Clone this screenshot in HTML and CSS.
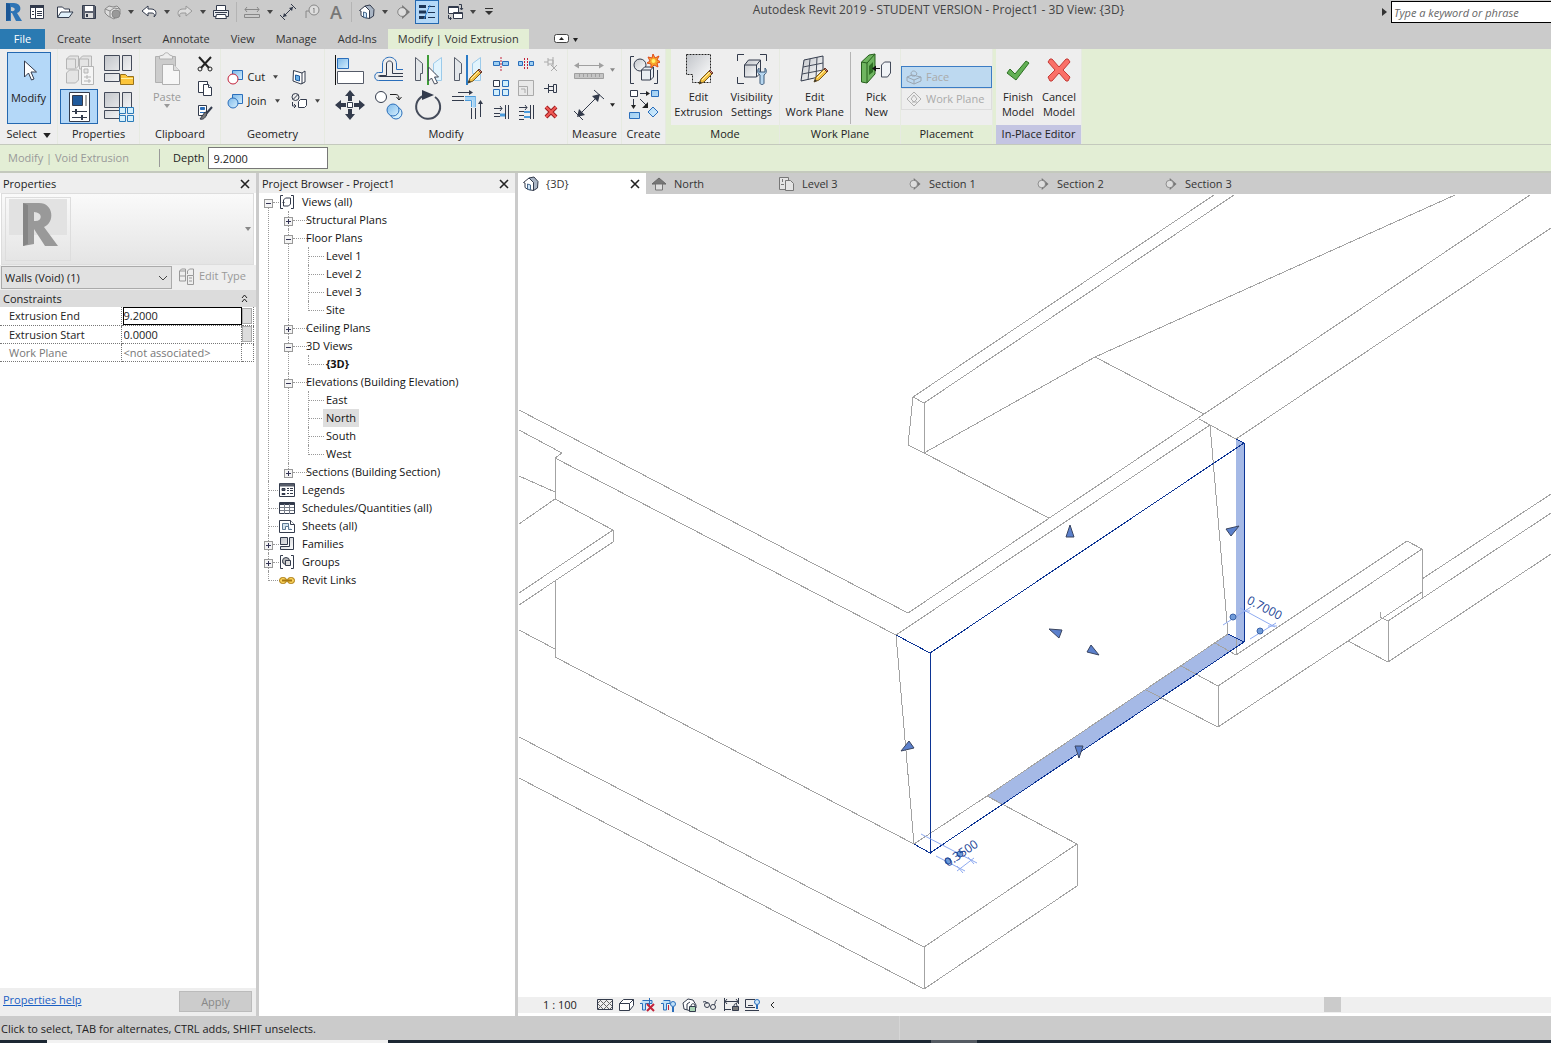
FILE: index.html
```
<!doctype html>
<html lang="en">
  <head>
    <meta charset="utf-8" />
    <title>Autodesk Revit 2019 - STUDENT VERSION - Project1 - 3D View: {3D}</title>
    <link rel="stylesheet" href="styles.css">
  </head>
  <body>
    <!-- shared icons -->
    <svg class="defs" aria-hidden="true">
      <defs>
        <linearGradient id="blue" x1="0" y1="0" x2="1" y2="1"><stop offset="0" stop-color="#7db8e8" /><stop offset="1" stop-color="#d6f0ff" /></linearGradient>
        <linearGradient id="grey" x1="0" y1="0" x2="1" y2="1"><stop offset="0" stop-color="#c2c5ca" /><stop offset="1" stop-color="#fff" /></linearGradient>
      </defs>
      <symbol id="down" viewBox="0 0 6 4"><path d="M0 0h6L3 4z" fill="currentColor" /></symbol>
      <symbol id="close" viewBox="0 0 10 10"><path d="M1 1l8 8M9 1L1 9" stroke="#222" stroke-width="1.600" /></symbol>
      <symbol id="pencil" viewBox="0 0 16 16"><path d="M1 15l2-5 9-9 3 3-9 9z" fill="#f3c244" stroke="#7a5a1c" /><path d="M4 11L13 2" stroke="#fff0b0" /><path d="M1 15l1-3 2 2z" fill="#333" /><path d="M11 2l3 3 1-1-3-3z" fill="#d98880" stroke="#6b3a2a" /></symbol>
      <symbol id="house" viewBox="0 0 16 16"><path d="M.500 6.500L6 2l4.500 4.500v8L5 13.500l-3-2V7z" fill="#fff" stroke="#333b4c" /><path d="M6 2l5-1 4 4.500-.500 6.500-4 2.500v-8z" fill="#a9b5c4" stroke="#333b4c" /><path d="M4.500 8v5l3 1V9z" fill="#cfe6fa" stroke="#4a6a8c" /></symbol>
      <symbol id="section" viewBox="0 0 16 16"><path d="M7 0l9 8-9 8z" fill="#777" /><circle cx="7" cy="8" r="5" fill="#ddd" stroke="#777" /></symbol>
    </svg>

    <header class="titlebar">
      <div class="quick-access">
        <button class="tool" aria-label="Revit"><svg width="18" height="20"><path fill-rule="evenodd" d="M2 1h8c8 0 8 9 3 10l5 8h-6l-4-8H7v8H2zm5 4v4c5 1 5-4 0-4z" fill="#2f74b5" /><path d="M2 1l4 1v16l-4 1z" fill="#1b5796" /></svg></button>
        <button class="tool" aria-label="Recent files"><svg width="16" height="16"><path d="M1.500 1.500h13v13h-13z" fill="#fff" stroke="#333b4c" /><path d="M1 1h14v3H1z" fill="#333b4c" /><path d="M6.500 4v10M3 7.500h2M3 10.500h2M8 7.500h5M8 9.500h5M8 11.500h5" stroke="#333b4c" /></svg></button>
        <button class="tool after-gap" aria-label="Open"><svg width="18" height="16"><path d="M1.500 13V3h5l2 2h5v3" fill="#fff" stroke="#333b4c" /><path d="M1.500 13.500L5 8h12l-4 5.500z" fill="#e0f0fa" stroke="#333b4c" /></svg></button>
        <button class="tool" aria-label="Save"><svg width="16" height="16"><path d="M1.500 1.500h12l1 1v12h-13z" fill="#5c6270" stroke="#333b4c" /><path d="M4 2h8v5H4z" fill="#fff" /><path d="M4 9h8v5H4z" fill="#ddd" /><path d="M6 10v3" stroke="#333b4c" stroke-width="2" /></svg></button>
        <button class="tool" aria-label="Synchronize"><svg width="18" height="16" fill="#ddd" stroke="#888"><path d="M1 5l4-3 4 1 4-1 3 3v5l-6 5-6-3-3-3z" /><path d="M1 5l5 2v6M6 7l4-3M10 4l6 1" /><circle cx="12" cy="10" r="4" fill="#999" /></svg></button>
        <button class="drop" aria-label="Synchronize options"><svg width="6" height="4"><use href="#down" /></svg></button>
        <button class="tool" aria-label="Undo"><svg width="16" height="14"><path d="M7 1v3h3c6 0 6 6 3 8 1-3 0-4-3-4H7v3L1 6z" fill="#fff" stroke="#333b4c" /></svg></button>
        <button class="drop" aria-label="Undo options"><svg width="6" height="4"><use href="#down" /></svg></button>
        <button class="tool" aria-label="Redo"><svg width="16" height="14"><path d="M9 1v3H6C0 4 0 10 3 12 2 9 3 8 6 8h3v3l6-5z" fill="#ddd" stroke="#999" /></svg></button>
        <button class="drop faded" aria-label="Redo options"><svg width="6" height="4"><use href="#down" /></svg></button>
        <button class="tool" aria-label="Print"><svg width="18" height="16" stroke="#333b4c"><path d="M4.500 1.500h9v5h-9z" fill="#fff" /><path d="M1.500 6.500h15v6h-15z" fill="#e8ebef" /><path d="M4.500 10.500h9l1 4h-11z" fill="#fff" /><path d="M3 8.500h12" /></svg></button>
        <span class="divider"></span>
        <button class="tool" aria-label="Measure"><svg width="16" height="12" fill="none" stroke="#888"><path d="M1 3.500h14M3 1L1 3.500 3 6M13 1l2 2.500L13 6M.500 8.500h15v3H.500z" /></svg></button>
        <button class="drop" aria-label="Measure options"><svg width="6" height="4"><use href="#down" /></svg></button>
        <button class="tool" aria-label="Aligned dimension"><svg width="16" height="16" stroke="#333b4c" fill="#333b4c"><path d="M3 13L13 3M0 11l5 5M11 0l5 5" /><path d="M3 13l1-4 3 3zM13 3l-1 4-3-3z" stroke="none" /></svg></button>
        <button class="tool" aria-label="Tag"><svg width="16" height="16" fill="#ddd" stroke="#888"><path d="M2 14V7h4" fill="none" /><circle cx="10" cy="6" r="5" /><path d="M9 5l1-1v5" fill="none" /></svg></button>
        <button class="tool letter" aria-label="Text">A</button>
        <span class="divider"></span>
        <button class="tool" aria-label="Default 3D view"><svg width="16" height="16"><use href="#house" /></svg></button>
        <button class="drop" aria-label="3D view options"><svg width="6" height="4"><use href="#down" /></svg></button>
        <button class="tool" aria-label="Section"><svg width="14" height="14"><use href="#section" /></svg></button>
        <button class="tool pressed" aria-label="Thin lines"><svg width="18" height="16" stroke="#1d3557" fill="none"><path d="M1 2.500h7M1 8h7M1 13.500h7" stroke-width="3" /><path d="M10 2.500h7M10 8.500h7M10 13.500h7" /><path d="M12 1L6 15" stroke="#2a7fd4" /></svg></button>
        <button class="tool after-gap" aria-label="Switch windows"><svg width="18" height="16" stroke="#333b4c"><path d="M2.500 2.500h10v7h-10zM7.500 8.500h9v6h-9z" fill="#fff" /><path d="M2 3.500h11M7 9.500h10" /><path d="M13 .500h2.500v5M14 4l1.500 2L17 4M2.500 11v3.500H5M4 13l1.500 1.500L4 16" fill="none" /></svg></button>
        <button class="drop" aria-label="Switch windows options"><svg width="6" height="4"><use href="#down" /></svg></button>
        <button class="drop customize" aria-label="Customize toolbar"><svg width="8" height="8" fill="#333"><path d="M0 0h8v1H0zM0 3h8L4 7z" /></svg></button>
      </div>
      <h1>Autodesk Revit 2019 - STUDENT VERSION - Project1 - 3D View: {3D}</h1>
      <svg class="search-arrow" width="5" height="8"><path d="M0 0l5 4-5 4z" fill="#333" /></svg>
      <input class="search" type="text" placeholder="Type a keyword or phrase" aria-label="Search" />
    </header>

    <nav class="tabs">
      <button class="file">File</button>
      <button>Create</button>
      <button>Insert</button>
      <button>Annotate</button>
      <button>View</button>
      <button>Manage</button>
      <button>Add-Ins</button>
      <button class="active">Modify | Void Extrusion</button>
      <button class="minimize" aria-label="Minimize ribbon"><svg width="24" height="10"><rect x=".5" y=".5" width="14" height="8" rx="2" fill="#fff" stroke="#444" /><path d="M5 6h5L7.500 3z" fill="#222" /><path d="M19 4h5l-2.500 4z" fill="#222" /></svg></button>
    </nav>

    <section class="ribbon">
      <div class="panel select">
        <div class="tools">
          <button class="big pressed"><svg width="32" height="34"><path d="M11.500 8v16l4-4 3 7 2.500-1-3-7h5.500z" fill="#fff" stroke="#333b4c" /></svg><span>Modify</span></button>
        </div>
        <h2>Select <svg width="8" height="5"><use href="#down" /></svg></h2>
      </div>

      <div class="panel properties-tools">
        <div class="tools pair-grid">
          <button aria-label="Type properties"><svg width="32" height="32" fill="#e4e4e4" stroke="#b5b5b5"><path d="M3.500 5l3-3h9v10l-3 3h-9zM16.500 5l3-3h9v10l-3 3h-9zM3.500 19l3-3h9v10l-3 3h-9z" /><path d="M3.500 5h9v9M16.500 5h9v9" fill="none" /><path d="M18.500 12.500h12v18h-12z" fill="#f5f5f5" /><path d="M21 15h4v4h-4zM21 23h7M21 27h7M24 21v4M26 25v4" /></svg></button>
          <button aria-label="Family category and parameters"><svg width="32" height="32" stroke="#444b5a"><path d="M1.500 1.500h15v15h-15zM19.500 1.500h9v15h-9zM1.500 19.500h15v8h-15z" fill="url(#grey)" /><path d="M17.500 20.500h5l2 2h6v8h-13z" fill="#fcc53a" stroke="#97711a" /><path d="M18 24.500h12" stroke="#fff0a0" /></svg></button>
          <button class="pressed" aria-label="Properties"><svg width="32" height="32" stroke="#333b4c"><path d="M6.500 1.500h20v29h-20z" fill="#fff" /><path d="M9.500 4.500h10v10h-10z" fill="#205a9c" /><path d="M23 4v11" stroke="#aaa" stroke-width="2" /><path d="M9 20.500h15M9 26.500h15" /><path d="M13 18v5M19 24v5" stroke-width="2" /></svg></button>
          <button aria-label="Family types"><svg width="32" height="32" stroke="#444b5a"><path d="M1.500 1.500h15v15h-15zM19.500 1.500h9v15h-9zM1.500 19.500h15v8h-15z" fill="url(#grey)" /><path d="M16.500 16.500h6v6h-6zM24.500 16.500h6v6h-6zM16.500 24.500h6v6h-6zM24.500 24.500h6v6h-6z" fill="#d5f0fc" stroke="#2a7ab8" /></svg></button>
        </div>
        <h2>Properties</h2>
      </div>

      <div class="panel clipboard">
        <div class="tools">
          <button class="big disabled" disabled><svg width="32" height="34" stroke="#b0b0b0"><path d="M4.500 4.500h20v26h-20z" fill="#ccc" /><path d="M8.500 7V4l4-1c1-3 5-3 6 0l3 1v3z" fill="#eee" /><path d="M11.500 12.500h11l6 6v14h-17z" fill="#f6f6f6" /><path d="M22.500 12.500v6h6" fill="#ddd" /></svg><span>Paste</span><svg width="6" height="4"><use href="#down" /></svg></button>
          <div class="stack">
            <button aria-label="Cut to clipboard"><svg width="16" height="16" fill="none" stroke="#222"><path d="M2 1l10 11M14 1L4 12" stroke-width="2" /><circle cx="3" cy="13" r="2" /><circle cx="13" cy="13" r="2" /></svg></button>
            <button aria-label="Copy to clipboard"><svg width="16" height="16" fill="#fff" stroke="#333b4c"><path d="M1.500 1.500h9v11h-9z" /><path d="M6.500 4.500h5l3 3v8h-8z" /><path d="M11.500 4.500v3h3" /></svg></button>
            <button aria-label="Match type"><svg width="16" height="16" stroke="#333b4c"><path d="M1.500 1.500h8v10h-8z" fill="#fff" /><path d="M3.500 3.500h4v2h-4zM3 8.500h5" fill="#2a6ebb" stroke="#2a6ebb" /><path d="M15 3l-6 7" stroke-width="2" /><path d="M10 9l-2-1-5 7c3 1 6-1 7-6z" fill="#777" /></svg></button>
          </div>
        </div>
        <h2>Clipboard</h2>
      </div>

      <div class="panel geometry">
        <div class="tools geometry-grid">
          <button><svg width="16" height="16"><path d="M5.500 1.500h10v9h-10z" fill="url(#blue)" stroke="#2a6ebb" /><circle cx="6" cy="10" r="5" fill="#fff" stroke="#c3223a" /></svg>Cut<svg class="menu-arrow" width="5" height="4"><use href="#down" /></svg></button>
          <button aria-label="Wall opening"><svg width="16" height="16" stroke="#333b4c"><path d="M2.500 1.500L11 4l3-2v11l-4 2-8-3z" fill="#fff" /><path d="M11 4v11" /><path d="M4.500 6l4 1v5l-4-1z" fill="#6cb3ea" stroke="#205a9c" /></svg></button>
          <button><svg width="16" height="16" fill="url(#blue)" stroke="#2a6ebb"><path d="M5.500 1.500h10v9h-10z" /><circle cx="6" cy="10" r="5" /></svg>Join<svg class="menu-arrow" width="5" height="4"><use href="#down" /></svg></button>
          <button aria-label="Geometry options"><svg width="16" height="16" fill="none" stroke="#333b4c"><circle cx="4.500" cy="4" r="3.500" /><path d="M2 6.500l5-5M1.500 9v4h3M3 11l2 2-2 2" /><path d="M7.500 8.500l2-2h6v6l-2 2h-6z" fill="#fff" /></svg><svg class="menu-arrow" width="5" height="4"><use href="#down" /></svg></button>
        </div>
        <h2>Geometry</h2>
      </div>

      <div class="panel modify">
        <div class="tools">
          <div class="big-grid">
            <button aria-label="Align"><svg width="32" height="32"><path d="M1.500 1v30" stroke="#111" /><path d="M3.500 4.500h11v10h-11z" fill="url(#blue)" stroke="#2a6ebb" /><path d="M3.500 17.500h26v12h-26z" fill="#fff" stroke="#555b68" /></svg></button>
            <button aria-label="Offset"><svg width="32" height="32" fill="none"><path d="M30 26.500H5.500c-5 0-5-8 0-8h4V10c0-9 14-9 14 0v5.500H30" stroke="#2a6ebb" /><path d="M30 22.500H7c-2 0-2-1 0-1h6.500V10c0-4 6-4 6 0v9.500H30" stroke="#333b4c" /></svg></button>
            <button aria-label="Mirror pick axis"><svg width="32" height="32"><path d="M3.500 3.500l7 6v10h-2v7h-5z" fill="#e4e7ea" stroke="#555b68" /><path d="M29.500 3.500l-8 6v10h2v7h6z" fill="#e2f4fd" stroke="#9bcaea" /><path d="M16 1v30" stroke="#3e9b38" stroke-width="2" /><path d="M16.500 13v14l3-3 3 6 3-1-3-6h4z" fill="#fff" stroke="#444b5a" /></svg></button>
            <button aria-label="Mirror draw axis"><svg width="32" height="32"><path d="M3.500 3.500l7 6v10h-2v7h-5z" fill="#e4e7ea" stroke="#555b68" /><path d="M29.500 3.500l-8 6v10h2v7h6z" fill="#e2f4fd" stroke="#9bcaea" /><path d="M16 1v30" stroke="#2a7ac6" stroke-width="2" /><use href="#pencil" x="16" y="14" width="16" height="16" /></svg></button>
            <button aria-label="Move"><svg width="32" height="32"><path d="M16 1l5 6h-3v5h-4V7h-3zM16 31l5-6h-3v-5h-4v5h-3zM1 16l6-5v3h5v4H7v3zM31 16l-6-5v3h-5v4h5v3z" fill="#333b4c" /><path d="M13.500 13.500h5v5h-5z" fill="#fff" stroke="#333b4c" /></svg></button>
            <button aria-label="Copy"><svg width="32" height="32" stroke="#2a6ebb"><circle cx="8" cy="8" r="5.500" fill="#fff" stroke="#333b4c" /><circle cx="23" cy="24" r="6" fill="#d3effc" /><circle cx="20" cy="21" r="6" fill="url(#blue)" /><path d="M17 5.500h5c3 0 4 1 4 5M23.500 8l2.500 3 2.500-3" fill="none" stroke="#222" /></svg></button>
            <button aria-label="Rotate"><svg width="32" height="32"><path d="M11 7a12 12 0 1 0 12 1" fill="none" stroke="#444b5a" stroke-width="2" /><path d="M10 1l12 5-12 5z" fill="#333b4c" /></svg></button>
            <button aria-label="Trim to corner"><svg width="32" height="32" fill="none"><path d="M14 7.500h10.500V18M14 11.500h6.500V18" stroke="#4b9bdb" /><path d="M14 9.500h9v9" stroke="#a6d4f5" stroke-width="3" /><path d="M1 7.500h12M1 11.500h12M20.500 19v11M24.500 19v11M7 3.500h14M29.500 28V13" stroke="#333b4c" /><path d="M18 1l4 2.500L18 6zM27 15l2.500-4 2.500 4z" fill="#333b4c" /></svg></button>
          </div>
          <div class="small-grid">
            <button aria-label="Split"><svg width="16" height="16"><path d="M.500 5.500h6v4h-6zM9.500 5.500h6v4h-6z" fill="#9fd0f2" stroke="#2a6ebb" /><path d="M8 1v14" stroke="#c3223a" stroke-dasharray="2 1" /></svg></button>
            <button aria-label="Split with gap"><svg width="16" height="16"><path d="M.500 5.500h4v4h-4zM11.500 5.500h4v4h-4z" fill="#9fd0f2" stroke="#2a6ebb" /><path d="M6.500 2v11M9.500 2v11" stroke="#c3223a" stroke-dasharray="2 1" /></svg></button>
            <button aria-label="Unpin"><svg width="16" height="16" fill="none" stroke="#aaa"><path d="M1 6h4M5 2v8M5 4h5v4H5M10 1v10M8 9l6 6M14 9l-6 6" /></svg></button>
            <button aria-label="Array"><svg width="18" height="18" stroke="#2a6ebb" fill="#d3effc"><path d="M10.500 1.500h6v6h-6zM1.500 10.500h6v6h-6zM10.500 10.500h6v6h-6z" /><path d="M1.500 1.500h6v6h-6z" fill="#fff" stroke="#333b4c" /></svg></button>
            <button aria-label="Scale"><svg width="16" height="16" fill="#e8e8e8" stroke="#aaa"><path d="M.500 .500h15v15H.500z" /><path d="M.500 6.500h9v9h-9z" /><path d="M3 9h4v4" /></svg></button>
            <button aria-label="Pin"><svg width="16" height="16" fill="none" stroke="#333b4c"><path d="M1 8.500h4M5.500 4v9M5.500 6.500h5v4h-5M10.500 4.500h3v8h-3z" /></svg></button>
            <button aria-label="Trim single"><svg width="16" height="16" stroke="#333b4c" fill="none"><path d="M1 4.500h8M7 2l2 2.500L7 7M1 9.500h6M1 12.500h6M12.500 1v14M15.500 1v14" /><path d="M7 11h5" stroke="#4b9bdb" stroke-width="3" /></svg></button>
            <button aria-label="Trim multiple"><svg width="16" height="16" stroke="#333b4c" fill="none"><path d="M1 3.500h8M7 1l2 2.500L7 6M1 7.500h5M1 11.500h5M1 15.500h5M12.500 1v14M15.500 1v14" /><path d="M6 8h6M6 13h6" stroke="#4b9bdb" stroke-width="2" /></svg></button>
            <button aria-label="Delete"><svg width="14" height="14"><path d="M2 2l10 10M12 2L2 12" stroke="#9d1d22" stroke-width="4" /><path d="M2 2l10 10M12 2L2 12" stroke="#f25a55" stroke-width="2" /></svg></button>
          </div>
        </div>
        <h2>Modify</h2>
      </div>

      <div class="panel measure">
        <div class="tools with-drops">
          <button aria-label="Measure"><svg width="32" height="32" stroke="#a0a0a0" fill="#c5c5c5"><path d="M2 11.500h28" /><path d="M1 11.500l5-3v6zM31 11.500l-5-3v6z" fill="#a0a0a0" stroke="none" /><path d="M1.500 19.500h29v5h-29z" /><path d="M6.500 20v3M10.500 20v3M14.500 20v3M18.500 20v3M22.500 20v3M26.500 20v3" /></svg></button>
          <button class="faded" aria-label="Measure options"><svg width="5" height="4"><use href="#down" /></svg></button>
          <button aria-label="Dimension"><svg width="32" height="32" stroke="#333b4c" fill="#333b4c"><path d="M5 27L26 6M1 22l9 9M21 1l10 9" /><path d="M4 28l2-8 6 6zM27 5l-2 8-6-6z" stroke="none" /></svg></button>
          <button aria-label="Dimension options"><svg width="5" height="4"><use href="#down" /></svg></button>
        </div>
        <h2>Measure</h2>
      </div>

      <div class="panel create">
        <div class="tools">
          <button aria-label="Create group"><svg width="32" height="32" stroke="#333b4c"><path d="M6 2.500H2.500v27H6M26 29.500h3.500V16" fill="none" /><circle cx="12" cy="11" r="6" fill="url(#grey)" /><path d="M13.500 16l3-3h9v10l-3 3h-9z" fill="#e8edf2" /><path d="M13.500 16h9v10M22.500 16l3-3" fill="none" /><path d="M25 0l2 4 4-2-2 4 4 2-4 1 1 4-4-2-3 3 0-4-4-1 3-2-2-4 4 1z" fill="#f7a52a" stroke="#e04a18" /><circle cx="25.500" cy="7" r="2" fill="#fff36b" stroke="none" /></svg></button>
          <button aria-label="Create similar"><svg width="32" height="32" stroke="#333b4c"><path d="M2.500 1.500h7v6h-7z" fill="#fff" /><path d="M12 4.500h8M5.500 10v8M12 10l6 6" fill="none" /><path d="M18 2l4 2.500L18 7zM3 16l2.500 4L8 16zM20 13v6h-6z" fill="#222" stroke="none" /><path d="M23.500 1.500h7v6h-7zM1.500 23.500h10v6h-10zM25 18l5 5-5 5-5-5z" fill="url(#blue)" stroke="#2a6ebb" /></svg></button>
        </div>
        <h2>Create</h2>
      </div>

      <div class="panel contextual mode">
        <div class="tools">
          <button class="big"><svg width="32" height="34"><path d="M3.500 2.500h24v28h-18v-8h-6z" fill="url(#grey)" stroke="#222" stroke-dasharray="2 1" /><use href="#pencil" x="15" y="17" width="16" height="16" /></svg><span>Edit<br />Extrusion</span></button>
          <button class="big"><svg width="32" height="34" stroke="#333b4c"><path d="M1.500 9V2.500H8M24 2.500h6.500V9M1.500 25v6.500H8" fill="none" /><path d="M8.500 13l4-5h12v13l-4 4h-12z" fill="url(#grey)" /><path d="M8.500 13h12v12M20.500 13l4-5" fill="none" /><path d="M23 16c-2 2-2 5 1 7v8c0 2 4 2 4 0v-8c3-2 3-5 1-7v4h-6z" fill="#b7d7f0" stroke="#3b5878" /></svg><span>Visibility<br />Settings</span></button>
        </div>
        <h2>Mode</h2>
      </div>

      <div class="panel contextual workplane">
        <div class="tools">
          <button class="big"><svg width="32" height="34"><path d="M5 8l19-4v20L2 29z" fill="url(#grey)" stroke="#333b4c" /><path d="M11 7L9 28M18 5l-1 21M4 15l20-4M3 22l21-4" stroke="#444b5a" /><use href="#pencil" x="14" y="15" width="16" height="16" /></svg><span>Edit<br />Work Plane</span></button>
          <span class="divider"></span>
          <button class="big"><svg width="32" height="34"><path d="M1.500 10L9 3l6-1v20l-8 9-5.500-1z" fill="#6fb560" stroke="#28601f" /><path d="M1.500 10l5.500 1v20M7 11l8-9" fill="none" stroke="#28601f" /><path d="M9 14l4-4v10l-4 3z" fill="#2e7024" /><path d="M13 16.500h7" stroke="#111" /><path d="M12 16.500l4-3v6z" fill="#111" /><path d="M21.500 13l3-3h6v11l-3 4h-6z" fill="#f0f3f6" stroke="#444b5a" /></svg><span>Pick<br />New</span></button>
        </div>
        <h2>Work Plane</h2>
      </div>

      <div class="panel contextual placement">
        <div class="tools">
          <button class="face" disabled><svg width="16" height="16" fill="none" stroke="#9aa6b2"><path d="M1 8l5-2 9 2v4l-7 3-7-3z" /><path d="M1 8l7 3 7-3M8 11v4M5 5c0-4 5-4 6 0L9 7H6z" /></svg>Face</button>
          <button class="plane" disabled><svg width="16" height="16" fill="none" stroke="#b0b0b0"><path d="M8 1l7 7-7 7-7-7z" /><path d="M5 8l3-4 3 4-3 3zM6 11h5" /></svg>Work Plane</button>
        </div>
        <h2>Placement</h2>
      </div>

      <div class="panel contextual inplace">
        <div class="tools">
          <button class="big"><svg width="32" height="34"><path d="M5 21l3-4 5 5L24 9l3 2-13 17z" fill="#63b055" stroke="#2e7024" /></svg><span>Finish<br />Model</span></button>
          <button class="big"><svg width="32" height="34"><path d="M5 10l2-3h2l7 8 7-8h2l2 3-7 8 7 7-2 4h-2l-7-8-7 8H7l-2-4 7-7z" fill="#fa7068" stroke="#c43a36" /></svg><span>Cancel<br />Model</span></button>
        </div>
        <h2>In-Place Editor</h2>
      </div>
    </section>

    <section class="options">
      <span class="context">Modify | Void Extrusion</span>
      <label for="depth">Depth</label>
      <input id="depth" type="text" value="9.2000" />
    </section>

    <main>
      <aside class="properties">
        <div class="caption"><h2>Properties</h2><button aria-label="Close properties"><svg width="10" height="10"><use href="#close" /></svg></button></div>
        <button class="type-selector" aria-label="Type selector">
          <svg class="preview" width="66" height="64"><path d="M3 1h58v36H3z" fill="#e2e2e2" /><path fill-rule="evenodd" d="M17 5h16c15 0 16 20 5 24l14 19H39L28 31v15l-11 2zm11 9v9c9 1 9-9 0-9z" fill="#999" /><path d="M17 5l5 2v39l-5 2z" fill="#858585" /></svg>
          <svg width="8" height="4"><use href="#down" /></svg>
        </button>
        <div class="filter">
          <select aria-label="Element filter"><option>Walls (Void) (1)</option></select>
          <button disabled><svg width="17" height="17" fill="none" stroke="#999"><path d="M1.500 3l2-2h4v12h-6zM8 8H2M9.500 6V3l2-2h4v6M8 3H2" /><path d="M9.500 7.500h6v9h-6zM11 10h3M11 13h3" /></svg>Edit Type</button>
        </div>
        <div class="group">Constraints <svg width="7" height="9" fill="none" stroke="#222"><path d="M1 4l2.500-3L6 4M1 8l2.500-3L6 8" /></svg></div>
        <table>
          <tr>
            <td><label for="end">Extrusion End</label></td>
            <td><input id="end" class="focused" type="text" value="9.2000" /></td>
            <td><button aria-label="Associate extrusion end"></button></td>
          </tr>
          <tr>
            <td><label for="start">Extrusion Start</label></td>
            <td><input id="start" type="text" value="0.0000" /></td>
            <td><button aria-label="Associate extrusion start"></button></td>
          </tr>
          <tr class="readonly">
            <td>Work Plane</td>
            <td>&lt;not associated&gt;</td>
            <td></td>
          </tr>
        </table>
        <div class="footer"><a href="#help">Properties help</a><button disabled>Apply</button></div>
      </aside>

      <aside class="browser">
        <div class="caption"><h2>Project Browser - Project1</h2><button aria-label="Close project browser"><svg width="10" height="10"><use href="#close" /></svg></button></div>
        <ul class="tree">
          <li>
            <div class="node"><button class="toggle" aria-label="Collapse"></button><svg width="16" height="16" fill="none" stroke="#333b4c"><path d="M4 1.500H1.500v13H4M12 1.500h2.500v13H12M4.500 6l2-2h5v6l-2 2h-5z" /></svg><span>Views (all)</span></div>
            <ul>
              <li><div class="node"><button class="toggle plus" aria-label="Expand"></button><span>Structural Plans</span></div></li>
              <li>
                <div class="node"><button class="toggle" aria-label="Collapse"></button><span>Floor Plans</span></div>
                <ul>
                  <li><div class="node"><span>Level 1</span></div></li>
                  <li><div class="node"><span>Level 2</span></div></li>
                  <li><div class="node"><span>Level 3</span></div></li>
                  <li><div class="node"><span>Site</span></div></li>
                </ul>
              </li>
              <li><div class="node"><button class="toggle plus" aria-label="Expand"></button><span>Ceiling Plans</span></div></li>
              <li>
                <div class="node"><button class="toggle" aria-label="Collapse"></button><span>3D Views</span></div>
                <ul>
                  <li><div class="node"><span class="current">{3D}</span></div></li>
                </ul>
              </li>
              <li>
                <div class="node"><button class="toggle" aria-label="Collapse"></button><span>Elevations (Building Elevation)</span></div>
                <ul>
                  <li><div class="node"><span>East</span></div></li>
                  <li><div class="node"><span class="selected">North</span></div></li>
                  <li><div class="node"><span>South</span></div></li>
                  <li><div class="node"><span>West</span></div></li>
                </ul>
              </li>
              <li><div class="node"><button class="toggle plus" aria-label="Expand"></button><span>Sections (Building Section)</span></div></li>
            </ul>
          </li>
          <li><div class="node"><svg width="16" height="16" fill="#fff" stroke="#333b4c"><path d="M.500 1.500h15v13H.500z" /><path d="M1 3h14" stroke-width="3" stroke="#555b68" /><path d="M3 6.500h3v2H3zM3 11.500h3v1H3z" fill="#555b68" /><path d="M8 6.500h2M11 6.500h3M8 8.500h2M11 8.500h3M8 11.500h2M11 11.500h3" /></svg><span>Legends</span></div></li>
          <li><div class="node"><svg width="16" height="16" fill="#fff" stroke="#777d88"><path d="M.500 2.500h15v11H.500z" stroke="#333b4c" /><path d="M1 4h14" stroke-width="2" stroke="#333b4c" /><path d="M1 7.500h14M1 10.500h14M5.500 4v10M10.500 4v10" /></svg><span>Schedules/Quantities (all)</span></div></li>
          <li><div class="node"><svg width="16" height="16" fill="#fff" stroke="#333b4c"><path d="M.500 2.500h11l4 4v8H.500z" /><path d="M11.500 2.500v4h4" /><path d="M3.500 5.500h6v3h-3v3h-3zM9.500 8v3.500H13" stroke="#5c7894" fill="#d4e4ee" /></svg><span>Sheets (all)</span></div></li>
          <li><div class="node"><button class="toggle plus" aria-label="Expand"></button><svg width="16" height="16" fill="url(#grey)" stroke="#333b4c"><path d="M1.500 1.500h7v7h-7zM10.500 1.500h4v12h-13v-3h9z" /></svg><span>Families</span></div></li>
          <li><div class="node"><button class="toggle plus" aria-label="Expand"></button><svg width="16" height="16" fill="#bbb" stroke="#333b4c"><path d="M4 1.500H1.500v13H4M12 1.500h2.500v13H12" fill="none" /><circle cx="7" cy="7" r="3.500" /><path d="M6.500 6.500h5v5h-5z" fill="#ddd" /></svg><span>Groups</span></div></li>
          <li><div class="node"><svg width="16" height="16" fill="#f7cf5a" stroke="#a8780f"><rect x=".5" y="5.500" width="7" height="6" rx="3" /><rect x="8.500" y="5.500" width="7" height="6" rx="3" /><path d="M3 8.500h10" stroke-width="2" /></svg><span>Revit Links</span></div></li>
        </ul>
      </aside>

      <section class="view">
        <nav class="view-tabs">
          <div class="view-tab active"><svg width="16" height="16"><use href="#house" /></svg><a href="#3d">{3D}</a><button aria-label="Close view"><svg width="10" height="10"><use href="#close" /></svg></button></div>
          <div class="view-tab"><svg width="16" height="16"><path d="M8 2l7 6H1z" fill="#777" stroke="#666" /><path d="M4.500 8v6h7V8z" fill="#ddd" stroke="#777" /></svg><a href="#north">North</a></div>
          <div class="view-tab"><svg width="16" height="16" fill="#e4e4e4" stroke="#777"><path d="M.500 1.500h9v12h-9z" /><path d="M6.500 4.500h5l3 3v7h-8z" /><path d="M3.500 3v3M2 8.500h3" /></svg><a href="#level3">Level 3</a></div>
          <div class="view-tab"><svg width="15" height="12"><use href="#section" /></svg><a href="#section1">Section 1</a></div>
          <div class="view-tab"><svg width="15" height="12"><use href="#section" /></svg><a href="#section2">Section 2</a></div>
          <div class="view-tab"><svg width="15" height="12"><use href="#section" /></svg><a href="#section3">Section 3</a></div>
        </nav>

        <svg class="model" viewBox="518 194 1033 803" preserveAspectRatio="xMinYMin slice" role="img" aria-label="3D view">
          <!-- void faces -->
          <path class="face-fill" d="M987 796L1228 634 1244 642 1002 805zM1236 439L1244 443V642L1236 638z" />
          <g class="edges">
            <!-- upper slab -->
            <path d="M1214 195L913 397 908 445 924 453 1049 518M913 397L924 403V453M924 403L1234 195M924 453L1095 357 1455 195M1095 357L1204 414" />
            <!-- wall -->
            <path d="M519 410L908 613 1530 195M1199 419L1236 439 1551 228M1210 425L896 635 914 844 987 796 1228 634 1210 425" />
            <path d="M519 430L562 453 555 458 896 635M555 458V499M519 476L555 492M519 524L555 499 613 530V542L519 605M613 530L519 593M555 581V657L914 844M519 630L555 649" />
            <!-- footings -->
            <path d="M519 737L924 947 1077 844 987 796M1077 844V886L924 989 519 778M924 947V989" />
            <path d="M1181 666L1218 686 1422 549M1146 690L1218 727 1422 592M1218 686V727M1215 643L1236 655 1407 541 1422 549V598M1236 638V655" />
            <path d="M1422 579L1551 494M1380 617L1388 621 1551 513M1388 621V662L1551 554M1380 617V612M1348 641L1388 662" />
          </g>
          <path class="void" d="M896 635L930 653 1244 443 1236 439M930 653V853L914 844M930 853L1244 642V443M1228 634L1244 642" />
          <g class="arrows">
            <path d="M1070 525L1066 537H1074zM1239 526L1226 529 1231 536zM1049 629L1062 630 1059 638zM1099 655L1087 652 1091 645zM901 751L909 741 914 748zM1079 758L1075 746H1083z" />
          </g>
          <g class="dimension">
            <path d="M1223 625L1251 607M1250 639L1276 623M1240 608L1275 627M1243 611h7M1268 626h9M921 834L977 863M936 856L965 871M957 871L974 858M968 857l6 7M957 866l6 7" />
            <circle cx="1233" cy="617" r="3" /><circle cx="1260" cy="631" r="3" /><circle cx="948" cy="861" r="3" /><circle cx="960" cy="854" r="3" />
            <text transform="translate(1246 603) rotate(27)">0.7000</text>
            <text transform="translate(948 867) rotate(-34)">0.3500</text>
          </g>
        </svg>

        <div class="view-controls">
          <button class="scale">1 : 100</button>
          <button aria-label="Detail level"><svg width="17" height="16" stroke="#333b4c"><path d="M.500 2.500h15v10H.500z" fill="#eee" /><path d="M1 6l3-3M1 12l9-9M7 12l8-8M13 12l2-2M3 3l9 9M9 3l6 6M1 7l5 5" stroke="#666" /></svg></button>
          <button aria-label="Visual style"><svg width="17" height="16" fill="#fff" stroke="#333b4c"><path d="M1.500 6.500l4-4h10v6l-4 5h-10z" /><path d="M1.500 6.500h10v7M11.500 6.500l4-4" /></svg></button>
          <button aria-label="Crop view"><svg width="17" height="16" fill="#bfe0f8" stroke="#2a6ebb"><path d="M1 6.500h2.500V13h3V6.500H13V3.500H3.500M10.500 1v9" /><path d="M8 7l7 7M15 7l-7 7" stroke="#c3223a" stroke-width="2" /></svg></button>
          <button aria-label="Show crop region"><svg width="17" height="16" fill="#bfe0f8" stroke="#2a6ebb"><path d="M1 6.500h2.500V13h3V6.500H10V3.500H3.500" /><path d="M8.500 8v5" stroke="#c3223a" /><path d="M13 10v5" stroke-width="2" /><circle cx="13" cy="7" r="2.500" /></svg></button>
          <button aria-label="Lock 3D view"><svg width="17" height="16" fill="#fff" stroke="#333b4c"><path d="M2 6l5-4 5 1 3 5v3l-5 3-7-2z" /><path d="M6 7v6M9 5l-3 2" /><path d="M8.500 9.500h6v5h-6z" fill="#a8d4b4" /><path d="M10 9c0-3 4-3 4 0" fill="none" /></svg></button>
          <button aria-label="Temporary hide"><svg width="17" height="16" fill="none" stroke="#333b4c"><path d="M1 5c3-1 4 0 4 2M15 3c-3 1-1 4-3 5" /><circle cx="5" cy="8" r="2.500" /><circle cx="11" cy="10" r="2.500" /></svg></button>
          <button aria-label="Reveal constraints"><svg width="17" height="16" fill="none" stroke="#333b4c"><path d="M1.500 1v13M15.500 1v6M2 4.500h13M4 2L2 4.500 4 7M13 2l2 2.500L13 7M2 12.500h6" /><path d="M9.500 9.500h6v4h-6z" fill="#777" /><path d="M11 9c0-3 3-3 3 0" /></svg></button>
          <button aria-label="Analytical model"><svg width="17" height="16" fill="none" stroke="#333b4c"><path d="M11 2.500H1.500v8H11M1 13.500h14M4 8.500h5" /><circle cx="13" cy="5" r="2.500" fill="#cfe8fa" stroke="#2a6ebb" /><path d="M13 8v4" stroke="#2a6ebb" stroke-width="2" /></svg></button>
          <button class="collapse" aria-label="Scroll left"><svg width="6" height="8"><path d="M5 1L2 4l3 3" fill="none" stroke="#222" /></svg></button>
          <div class="scroller"><div class="thumb"></div></div>
        </div>
      </section>
    </main>

    <footer class="status"><p>Click to select, TAB for alternates, CTRL adds, SHIFT unselects.</p></footer>
    <div class="taskbar"><span class="light"></span><span class="mid"></span></div>
  </body>
</html>
```
FILE: styles.css
```
* {
  box-sizing: border-box;
}
body {
  margin: 0;
  height: 100vh;
  display: flex;
  flex-direction: column;
  overflow: hidden;
  background: #cbcbcb;
  color: #222;
  font: 11px/18px "Open Sans", "Noto Sans", sans-serif;
}
h1,
h2,
p,
ul {
  margin: 0;
  padding: 0;
  font-size: inherit;
  font-weight: normal;
  list-style: none;
}
button,
input,
select {
  font: inherit;
  color: inherit;
  padding: 0;
  margin: 0;
  border: 0;
  background: none;
  border-radius: 0;
}
button {
  display: flex;
  align-items: center;
  justify-content: center;
  white-space: nowrap;
}
svg {
  flex: none;
}
.defs {
  position: absolute;
  width: 0;
  height: 0;
}
.faded {
  color: #888;
}

/* title bar */
.titlebar {
  display: flex;
  height: 24px;
  flex: none;
}
.quick-access {
  display: flex;
  align-items: center;
  padding-left: 1px;
}
.tool {
  width: 24px;
  height: 24px;
}
.drop {
  width: 12px;
  height: 24px;
  color: #444;
}
.after-gap {
  margin-left: 4px;
}
.letter {
  font-size: 18px;
  font-weight: 600;
  color: #777;
}
.customize {
  margin-left: 4px;
}
.pressed {
  background: #b4d8f8;
  border: 1px solid #2468b0;
}
.divider {
  width: 1px;
  height: 20px;
  margin: 0 3px;
  background: #b4b4b4;
}
.titlebar h1 {
  flex: 1;
  text-align: center;
  font-size: 12px;
  line-height: 20px;
  color: #444;
}
.search-arrow {
  margin: 8px 4px 0 0;
}
.search {
  width: 160px;
  height: 22px;
  margin-top: 1px;
  padding: 0 2px;
  border: 1px solid #000;
  border-right: 0;
  background: #fff;
}
.search::placeholder {
  color: #666;
  font-style: italic;
}

/* ribbon tabs */
.tabs {
  display: flex;
  flex: none;
  gap: 1px;
  padding-top: 5px;
  height: 25px;
}
.tabs button {
  padding: 0 10px;
  color: #333;
}
.tabs .file {
  width: 45px;
  margin-right: 1px;
  background: #2a7ab2;
  color: #fff;
}
.tabs .active {
  background: #e3eed5;
}
.tabs .minimize {
  margin-left: 14px;
}

/* ribbon */
.ribbon {
  display: flex;
  flex: none;
  height: 96px;
  background: #e3eed5;
  border-bottom: 1px solid #c4c9bd;
}
.panel {
  display: flex;
  flex-direction: column;
  flex: none;
  background: #eee;
  border-right: 1px solid #e6eae1;
}
.panel h2 {
  text-align: center;
  height: 19px;
  white-space: nowrap;
}
.panel h2 svg {
  margin-left: 3px;
}
.tools {
  flex: 1;
  display: flex;
  justify-content: center;
  padding-top: 3px;
}
.contextual h2 {
  background: #e3eed5;
}
.big {
  flex-direction: column;
  justify-content: flex-start;
  height: 72px;
  line-height: 15px;
}
.big span {
  margin-top: 3px;
}
.disabled {
  color: #999;
}
.select {
  width: 58px;
}
.select .big {
  width: 44px;
}
.properties-tools {
  width: 82px;
}
.pair-grid {
  display: grid;
  grid-template-columns: 38px 38px;
  grid-template-rows: 35px 35px;
  gap: 2px;
}
.clipboard {
  width: 81px;
}
.clipboard .tools {
  gap: 14px;
  padding-left: 4px;
}
.stack {
  display: grid;
  grid-template-rows: repeat(3, 24px);
}
.geometry {
  width: 104px;
}
.geometry-grid {
  display: grid;
  grid-template-columns: 64px 28px;
  grid-auto-rows: 24px;
  align-content: center;
}
.geometry-grid button {
  justify-content: flex-start;
  gap: 5px;
}
.menu-arrow {
  margin-left: 3px;
  color: #444;
}
.modify {
  width: 243px;
}
.modify .tools {
  gap: 2px;
  padding-left: 2px;
}
.big-grid {
  display: grid;
  grid-template-columns: repeat(4, 39px);
  grid-auto-rows: 35px;
}
.small-grid {
  display: grid;
  grid-template-columns: repeat(3, 25px);
  grid-auto-rows: 24px;
}
.measure {
  width: 54px;
}
.with-drops {
  display: grid;
  grid-template-columns: 36px 12px;
  grid-auto-rows: 35px;
}
.create {
  width: 44px;
}
.create .tools {
  display: grid;
  grid-auto-rows: 35px;
}
.mode {
  margin-left: 5px;
  width: 109px;
}
.mode .big {
  width: 53px;
}
.workplane {
  width: 121px;
}
.workplane .tools {
  justify-content: flex-start;
}
.workplane .big {
  width: 70px;
}
.workplane .big:last-child {
  width: 48px;
}
.workplane .divider {
  height: 72px;
  margin: 0 1px;
}
.placement {
  width: 92px;
}
.placement .tools {
  flex-direction: column;
  justify-content: flex-start;
  padding-top: 17px;
}
.placement button {
  height: 22px;
  justify-content: flex-start;
  gap: 4px;
  padding-left: 4px;
  color: #aaa;
}
.face {
  background: #bdd9f0;
  border: 1px solid #3b7cc4;
}
.plane {
  border: 1px solid #ddd;
}
.inplace {
  margin-left: 3px;
  width: 86px;
}
.inplace .big {
  width: 41px;
}
.inplace h2 {
  background: #c4c5e2;
}

/* options bar */
.options {
  display: flex;
  align-items: center;
  flex: none;
  height: 28px;
  background: #e3eed5;
  border-bottom: 2px solid #c4c9bd;
}
.context {
  width: 160px;
  padding-left: 8px;
  border-right: 1px solid #999;
  color: #999;
}
.options label {
  padding: 0 3px 0 13px;
}
.options input {
  width: 120px;
  height: 22px;
  padding: 0 5px;
  border: 1px solid #777;
  background: #fff;
}

/* docked palettes */
main {
  flex: 1;
  min-height: 0;
  display: flex;
  gap: 3px;
}
aside {
  flex: none;
  display: flex;
  flex-direction: column;
  background: #fff;
}
.caption {
  display: flex;
  justify-content: space-between;
  flex: none;
  height: 20px;
  padding: 0 6px 0 3px;
  background: #eee;
  line-height: 21px;
}
.properties {
  width: 256px;
}
.caption button {
  padding-top: 1px;
}
.type-selector {
  flex: none;
  justify-content: space-between;
  height: 72px;
  margin: 0 2px 0 1px;
  padding: 0 1px 0 3px;
  border: 1px solid #ddd;
  background: linear-gradient(#fafafa, #e4e4e4);
  color: #888;
}
.preview {
  border: 1px solid #ddd;
}
.filter {
  display: flex;
  flex: none;
  height: 25px;
  padding: 1px 3px 1px 1px;
  background: #eee;
}
.filter select {
  width: 171px;
  padding-left: 3px;
  border: 1px solid #aaa;
  appearance: none;
  background: #e1e1e1 url("data:image/svg+xml,%3Csvg xmlns='http://www.w3.org/2000/svg' width='10' height='6' fill='none' stroke='%23444'%3E%3Cpath d='M1 1l4 4 4-4'/%3E%3C/svg%3E") no-repeat right 3px center;
}
.filter button {
  margin-left: 6px;
  gap: 4px;
  color: #999;
  height: 20px;
}
.group {
  display: flex;
  justify-content: space-between;
  align-items: center;
  flex: none;
  height: 17px;
  padding: 0 8px 0 3px;
  background: #dcdcdc;
}
.properties table {
  flex: none;
  width: 254px;
  border-collapse: collapse;
  table-layout: fixed;
}
.properties td {
  height: 18px;
  padding: 0 0 0 2px;
  line-height: 17px;
  border: 1px dotted #777;
  border-top: 0;
}
.properties td:first-child {
  width: 121px;
  padding-left: 9px;
  border-left: 0;
}
.properties td:last-child {
  width: 12px;
  padding: 0;
}
.properties td input {
  display: block;
  width: 100%;
  height: 16px;
}
.properties td .focused {
  outline: 1px solid #000;
}
.properties td button {
  width: 10px;
  height: 16px;
  border: 1px solid #aaa;
  background: #ddd;
}
.readonly {
  color: #777;
}
.footer {
  margin-top: auto;
  display: flex;
  justify-content: space-between;
  flex: none;
  height: 28px;
  padding: 3px 4px 4px 3px;
  background: #eee;
}
.footer a {
  color: #1a5fc4;
}
.footer button {
  width: 73px;
  border: 1px solid #bbb;
  background: #ccc;
  color: #888;
}

/* project tree */
.browser {
  width: 256px;
}
.tree {
  flex: 1;
  overflow: hidden;
  color: #111;
}
.tree ul {
  padding-left: 20px;
}
.tree li {
  position: relative;
}
.tree li::before {
  content: "";
  position: absolute;
  left: 9px;
  top: 0;
  bottom: 0;
  border-left: 1px dotted #999;
}
.tree > li:first-child::before {
  top: 9px;
}
.tree li:last-child::before {
  bottom: auto;
  height: 10px;
}
.node {
  display: flex;
  align-items: center;
  height: 18px;
  padding-left: 9px;
}
.node::before {
  content: "";
  width: 12px;
  margin-right: -1px;
  border-top: 1px dotted #999;
}
.node span {
  padding: 0 3px;
}
.node svg {
  margin-right: 4px;
}
.tree ul .node::before {
  width: 16px;
}
.toggle {
  order: -1;
  position: relative;
  width: 9px;
  height: 9px;
  margin: 2px 0 0 -4px;
  border: 1px solid #999;
  background: #f4f4f4;
}
.toggle + svg,
.toggle + span {
  margin-left: -5px;
}
.toggle::before,
.plus::after {
  content: "";
  position: absolute;
  left: 1px;
  top: 3px;
  width: 5px;
  height: 1px;
  background: #335;
}
.plus::after {
  left: 3px;
  top: 1px;
  width: 1px;
  height: 5px;
}
.current {
  font-weight: bold;
}
.node .selected {
  background: #dedede;
}

/* drawing area */
.view {
  flex: 1;
  min-width: 0;
  display: flex;
  flex-direction: column;
  background: #fff;
}
.view-tabs {
  display: flex;
  flex: none;
  height: 21px;
  background: #cbcbcb;
}
.view-tab {
  display: flex;
  align-items: center;
  width: 128px;
  gap: 7px;
  padding: 0 6px 0 5px;
}
.view-tab.active {
  background: #fff;
}
.view-tab a {
  flex: 1;
  color: #333;
  text-decoration: none;
}
.model {
  flex: 1;
  width: 100%;
  min-height: 0;
}
.edges,
.void {
  fill: none;
  stroke: #a3a3a3;
  shape-rendering: crispEdges;
}
.void {
  stroke: #0c3494;
}
.face-fill {
  fill: #a5b9e6;
}
.arrows {
  fill: #5b80cc;
  stroke: #3a4560;
}
.dimension {
  fill: none;
  stroke: #8eaaf0;
}
.dimension circle {
  fill: #6f9ad8;
  stroke: #3a62a8;
}
.dimension text {
  fill: #1c4596;
  stroke: none;
  font-size: 12px;
}
.view-controls {
  display: flex;
  flex: none;
  height: 16px;
  margin-bottom: 3px;
  padding-left: 25px;
  background: #efefef;
}
.view-controls button {
  width: 21px;
}
.view-controls .scale {
  width: 52px;
  justify-content: flex-start;
}
.view-controls .collapse {
  width: 17px;
}
.scroller {
  flex: 1;
  padding-left: 54%;
}
.thumb {
  width: 17px;
  height: 15px;
  background: #cbcbcb;
}

/* status bar */
.status {
  flex: none;
  height: 24px;
  padding-left: 1px;
  line-height: 26px;
  background: #cbcbcb;
}
.status p {
  width: 58%;
  border-right: 1px solid #d6d6d6;
}
.taskbar {
  display: flex;
  flex: none;
  height: 3px;
  background: #1c2733;
}
.light {
  width: 22%;
  margin-left: 3%;
  background: #f2f2f2;
}
.mid {
  width: 3%;
  margin-left: 35%;
  background: #555b63;
}
```
